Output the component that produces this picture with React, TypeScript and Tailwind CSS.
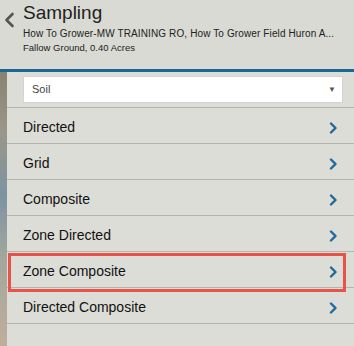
import React from "react";

const Chevron = () => (
  <svg width="9" height="12" viewBox="0 0 9 12" className="shrink-0">
    <path d="M2 1.5 L6.5 6 L2 10.5" fill="none" stroke="#1f6a98" strokeWidth="2.4" strokeLinecap="round" strokeLinejoin="round" />
  </svg>
);

const rows = ["Directed", "Grid", "Composite", "Zone Directed", "Zone Composite", "Directed Composite"];

export default function App() {
  return (
    <div
      className="w-[354px] h-[346px] overflow-hidden bg-[#dcddd6] flex flex-col text-[#111]"
      style={{ fontFamily: '"Liberation Sans", Arial, sans-serif' }}
    >
      <div className="h-[69px] bg-[#d9dad3] flex items-start pl-[4px] pr-[8px]">
        <svg width="11" height="16" viewBox="0 0 11 16" className="mt-[12px] shrink-0">
          <path d="M8.5 2 L2.5 8 L8.5 14" fill="none" stroke="#555" strokeWidth="2.6" strokeLinecap="round" strokeLinejoin="round" />
        </svg>
        <div className="ml-[8px] flex flex-col min-w-0">
          <div className="text-[19px] leading-[22px] mt-[2px] text-[#222]">Sampling</div>
          <div className="text-[10px] leading-[14px] mt-[3px] text-[#222] whitespace-nowrap tracking-[0.12px]">
            How To Grower-MW TRAINING RO, How To Grower Field Huron A...
          </div>
          <div className="text-[9.5px] leading-[14px] text-[#222]">Fallow Ground, 0.40 Acres</div>
        </div>
      </div>
      <div className="h-[3px] bg-[#1b6794]" />
      <div className="flex flex-1">
        <div className="w-[7px] bg-[linear-gradient(to_bottom,#8a8270,#9a978a_22%,#7c93a2_45%,#a3a79d_68%,#c0ae9b)]" />
        <div className="flex-1 flex flex-col">
          <div className="h-[36px] border-b border-[#b3b5ae] pt-[4px] pl-[16px] pr-[11px]">
            <div className="h-[27px] bg-white border border-[#d4d4d4] flex items-center justify-between pl-[8px] pr-[6px]">
              <span className="text-[11px] text-[#444]">Soil</span>
              <span className="text-[8px] text-[#555]">▼</span>
            </div>
          </div>
          {rows.map((r) => (
            <div key={r} className="relative h-[36px] border-b border-[#b3b5ae] flex items-center justify-between pl-[16px] pr-[16px]">
              <span className="text-[14px] mt-[4px]">{r}</span>
              <span className="mt-[4px]"><Chevron /></span>
              {r === "Zone Composite" && (
                <div className="absolute left-[1px] top-[1px] w-[338px] h-[39px] border-[3px] border-[#e5534b]" />
              )}
            </div>
          ))}
        </div>
      </div>
    </div>
  );
}
